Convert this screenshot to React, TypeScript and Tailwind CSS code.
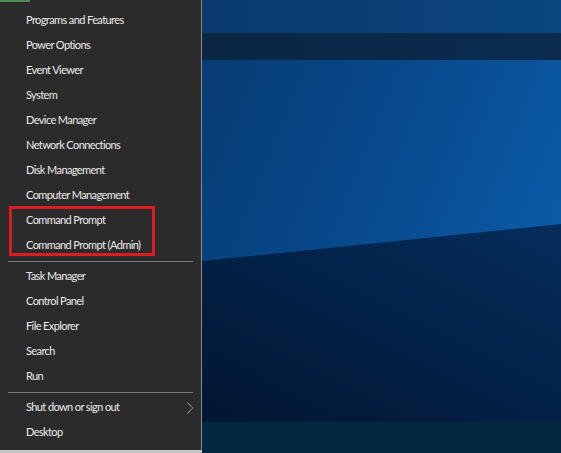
import { ChevronRight } from "lucide-react";

type Entry = { label: string; submenu?: boolean } | "sep";

const entries: Entry[] = [
  { label: "Programs and Features" },
  { label: "Power Options" },
  { label: "Event Viewer" },
  { label: "System" },
  { label: "Device Manager" },
  { label: "Network Connections" },
  { label: "Disk Management" },
  { label: "Computer Management" },
  { label: "Command Prompt" },
  { label: "Command Prompt (Admin)" },
  "sep",
  { label: "Task Manager" },
  { label: "Control Panel" },
  { label: "File Explorer" },
  { label: "Search" },
  { label: "Run" },
  "sep",
  { label: "Shut down or sign out", submenu: true },
  { label: "Desktop" },
];

function Wallpaper() {
  return (
    <svg viewBox="0 0 359 422" preserveAspectRatio="none" className="block h-[422px] w-full">
      <defs>
        <linearGradient id="top" x1="0" y1="0" x2="1" y2="0">
          <stop offset="0" stopColor="#0a3a6c" />
          <stop offset="1" stopColor="#0b4680" />
        </linearGradient>
        <linearGradient id="band" x1="0" y1="0" x2="1" y2="0">
          <stop offset="0" stopColor="#0a2643" />
          <stop offset="1" stopColor="#0b2c4f" />
        </linearGradient>
        <linearGradient id="mid" x1="0" y1="0" x2="1" y2="0.4">
          <stop offset="0" stopColor="#073c73" />
          <stop offset="0.55" stopColor="#084a8e" />
          <stop offset="1" stopColor="#0b5aa6" />
        </linearGradient>
        <linearGradient id="low" x1="0" y1="1" x2="0.9" y2="0">
          <stop offset="0" stopColor="#021631" />
          <stop offset="0.6" stopColor="#03234a" />
          <stop offset="1" stopColor="#052c5a" />
        </linearGradient>
      </defs>
      <rect x="0" y="0" width="359" height="34" fill="url(#top)" />
      <rect x="0" y="33" width="359" height="27" fill="url(#band)" />
      <rect x="0" y="60" width="359" height="362" fill="url(#mid)" />
      <polygon points="0,261 359,224 359,422 0,422" fill="url(#low)" />
    </svg>
  );
}

export default function App() {
  return (
    <div className="flex h-[453px] w-[561px] overflow-hidden bg-[#032a42] font-['Lato',sans-serif]">
      <div className="flex w-[202px] shrink-0 flex-col">
        <div className="relative flex h-[450px] flex-col border-r border-[#8a8a8a] bg-[#2b2b2b] pt-[8px] text-[11px] text-[#ececec]">
          <div className="absolute left-0 top-0 h-[2px] w-[30px] bg-[#4d8a52]" />
          {entries.map((entry, i) =>
            entry === "sep" ? (
              <div key={i} className="flex h-[6px] items-center px-[8px]">
                <div className="h-px w-full bg-[#7a7a7a]" />
              </div>
            ) : (
              <div key={i} className="flex h-[25px] items-center justify-between pl-[26px] tracking-[-0.6px]">
                <span>{entry.label}</span>
                {entry.submenu && <ChevronRight className="size-[22px] text-[#a8a8a8]" strokeWidth={1} />}
              </div>
            )
          )}
          <div className="absolute left-[9px] top-[206px] h-[50px] w-[146px] border-[3px] border-[#dc1c22]" />
        </div>
        <div className="flex-1 bg-[#c4c4c4]" />
      </div>
      <div className="flex flex-1 flex-col">
        <Wallpaper />
        <div className="flex-1 bg-[#03283f]" />
      </div>
    </div>
  );
}
